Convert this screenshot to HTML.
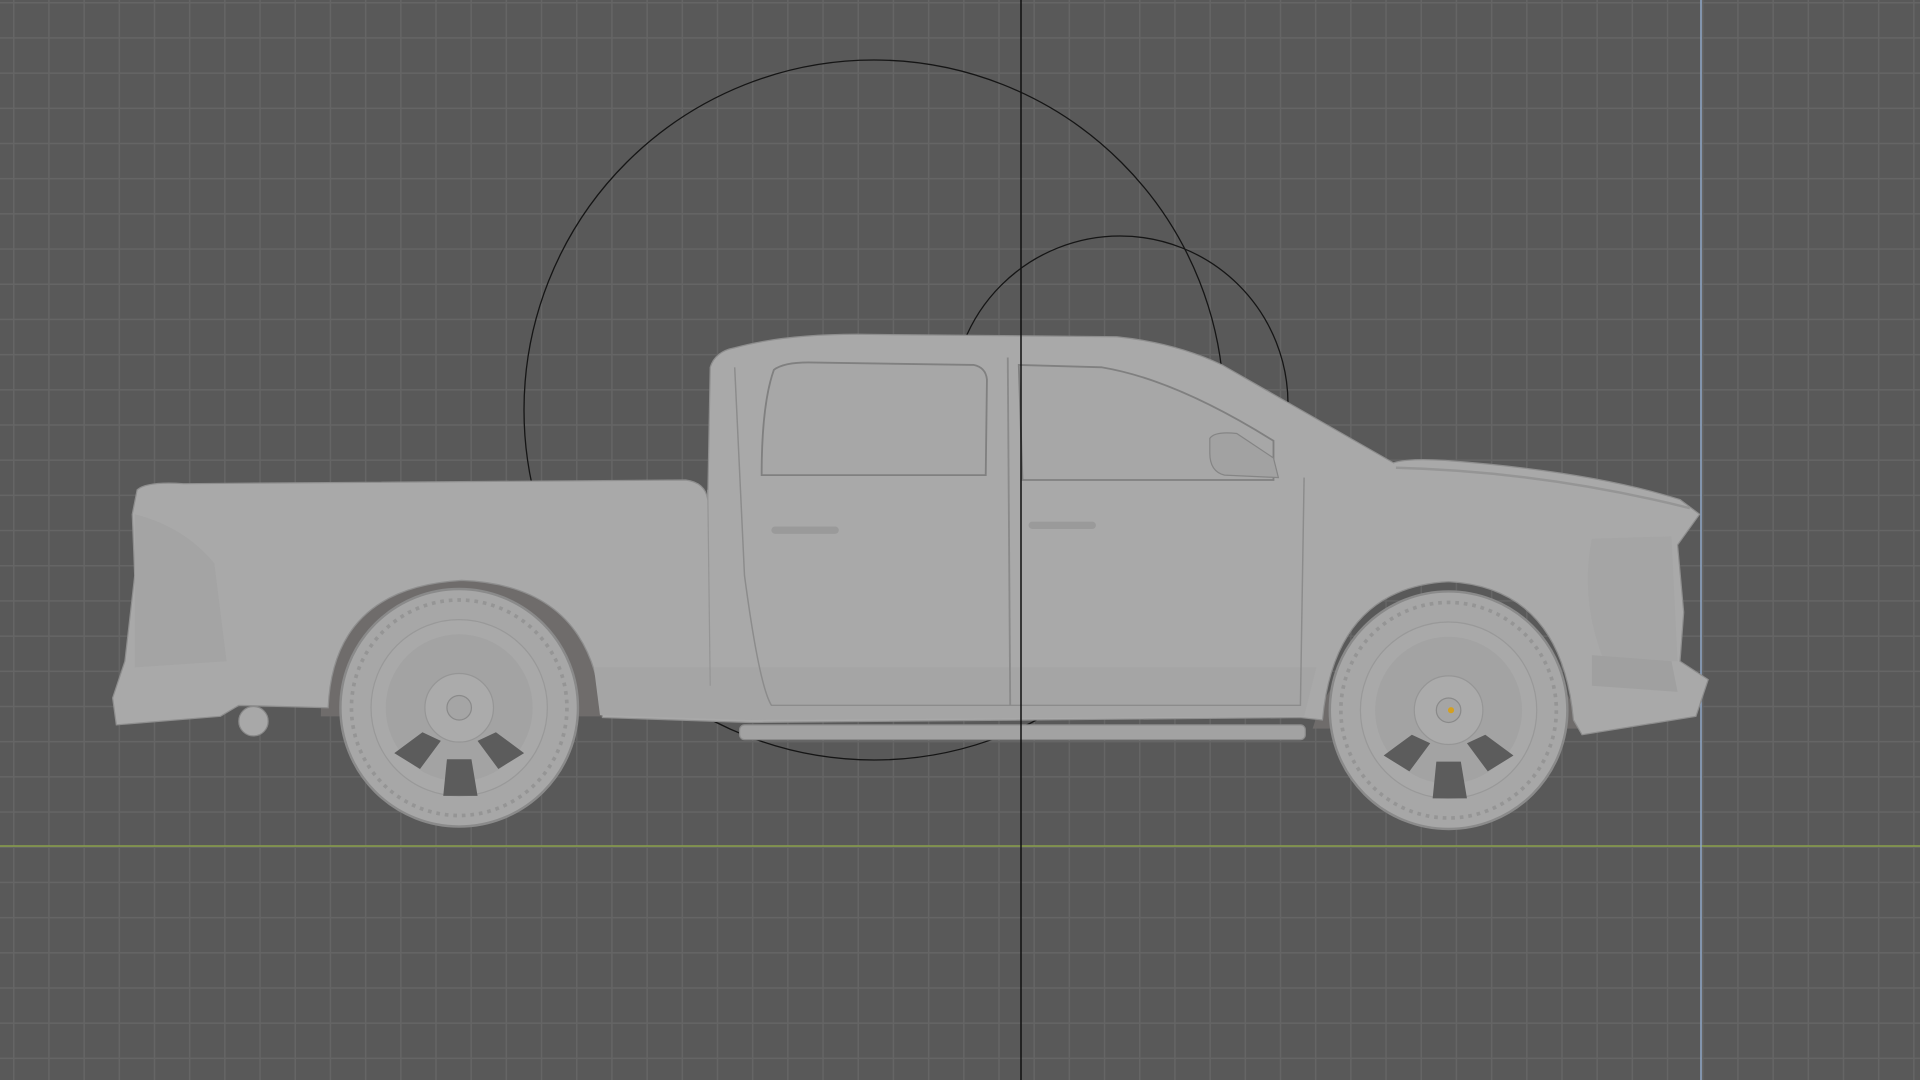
<!DOCTYPE html>
<html><head><meta charset="utf-8"><style>
html,body{margin:0;padding:0;width:1920px;height:1080px;overflow:hidden;background:#595959}
.bg{position:absolute;left:0;top:0;width:1920px;height:1080px;
background-color:#595959;
background-image:linear-gradient(to right,#656565 0,#656565 1.5px,transparent 1.5px),linear-gradient(to bottom,#656565 0,#656565 1.5px,transparent 1.5px);
background-size:35.2px 35.2px;background-position:13px 2px;}
svg{position:absolute;left:0;top:0}
</style></head><body>
<div class="bg"></div>
<svg width="1920" height="1080" viewBox="0 0 1920 1080">
<circle cx="874" cy="410" r="350" fill="none" stroke="#151515" stroke-width="1.3"/>
<circle cx="1120" cy="404" r="168" fill="none" stroke="#151515" stroke-width="1.3"/>
<line x1="0" y1="846" x2="1920" y2="846" stroke="#8aa04a" stroke-width="1.5"/>
<line x1="1701" y1="0" x2="1701" y2="1080" stroke="#8fa8c8" stroke-width="1.5"/>
<g transform="scale(1.2245)">
 <path d="M262,585 A115,118 0 0 1 492,585 Z" fill="#6f6c6b"/>
 <path d="M1072,595 A115,120 0 0 1 1292,595 Z" fill="#6f6c6b"/>
 <rect x="604" y="592" width="462" height="12" rx="4" fill="#a2a2a2" stroke="#8a8a8a"/>
 <circle cx="207" cy="589" r="12" fill="#a8a8a8" stroke="#888"/>
 <path d="M112,400 Q120,393 150,395 L560,392 Q576,394 578,408 L580,300 Q584,287 600,284 Q640,273 700,273 L912,275 Q960,280 998,298 L1138,378 Q1150,374 1180,376 Q1300,385 1372,408 L1388,420 L1370,445 L1375,500 L1372,540 L1395,555 L1385,585 L1292,600 L1285,588 Q1275,480 1183,475 Q1090,480 1080,588 L1062,586 L612,590 L492,586 Q485,478 377,474 Q272,480 268,578 L195,576 L180,585 L95,592 L92,570 L102,540 L110,470 L108,420 Z" fill="#a9a9a9" stroke="#8e8e8e" stroke-width="1"/>
 <path d="M110,420 Q150,430 175,460 L185,540 L110,545 Z" fill="#a4a4a4"/>
 <path d="M1300,440 L1365,438 L1370,540 L1310,540 Q1290,490 1300,440Z" fill="#a5a5a5"/>
 <path d="M1300,535 L1365,540 L1370,565 L1300,560Z" fill="#a0a0a0"/>
 <path d="M1140,382 Q1260,385 1380,415" fill="none" stroke="#959595" stroke-width="2"/>
 <path d="M485,545 Q520,545 560,545 L1075,545 L1065,585 L612,588 L490,584Z" fill="#a5a5a5"/>
 <path d="M632,302 Q640,296 660,296 L795,298 Q805,300 806,310 L805,388 L622,388 Q622,330 632,302Z" fill="#a7a7a7" stroke="#808080" stroke-width="1.5"/>
 <path d="M832,298 L900,300 Q960,310 1040,360 L1040,392 L835,392 Z" fill="#a7a7a7" stroke="#808080" stroke-width="1.5"/>
 <path d="M600,300 Q605,400 608,470 Q620,560 630,576 L1062,576 L1065,390" fill="none" stroke="#8c8c8c" stroke-width="1.2"/>
 <line x1="823" y1="292" x2="825" y2="576" stroke="#8a8a8a" stroke-width="1.5"/>
 <line x1="578" y1="400" x2="580" y2="560" stroke="#959595"/>
 <rect x="630" y="430" width="55" height="6" rx="3" fill="#9a9a9a"/>
 <rect x="840" y="426" width="55" height="6" rx="3" fill="#9a9a9a"/>
 <path d="M988,358 Q992,352 1010,354 L1040,374 L1044,390 L1000,388 Q988,385 988,370Z" fill="#a2a2a2" stroke="#858585"/>
 <g id="w">
  <circle cx="375" cy="578" r="97" fill="#a7a7a7" stroke="#8a8a8a" stroke-width="2"/>
  <circle cx="375" cy="578" r="88" fill="none" stroke="#959595" stroke-width="3" stroke-dasharray="3 4"/>
  <circle cx="375" cy="578" r="72" fill="#a9a9a9" stroke="#999"/>
  <circle cx="375" cy="578" r="60" fill="#a3a3a3"/>
  <path d="M322,615 L345,598 L360,605 L343,628 Z" fill="#5c5c5c"/>
  <path d="M428,615 L405,598 L390,605 L407,628 Z" fill="#5c5c5c"/>
  <path d="M365,620 L385,620 L390,650 L362,650 Z" fill="#5c5c5c"/>
  <circle cx="375" cy="578" r="28" fill="#ababab" stroke="#969696"/>
  <circle cx="375" cy="578" r="10" fill="#a5a5a5" stroke="#8a8a8a"/>
 </g>
 <use href="#w" x="808" y="2"/>
 <circle cx="1185" cy="580" r="2.5" fill="#d4a020"/>
</g>
<line x1="1021" y1="0" x2="1021" y2="1080" stroke="#111" stroke-width="1.5"/>
</svg>
</body></html>
